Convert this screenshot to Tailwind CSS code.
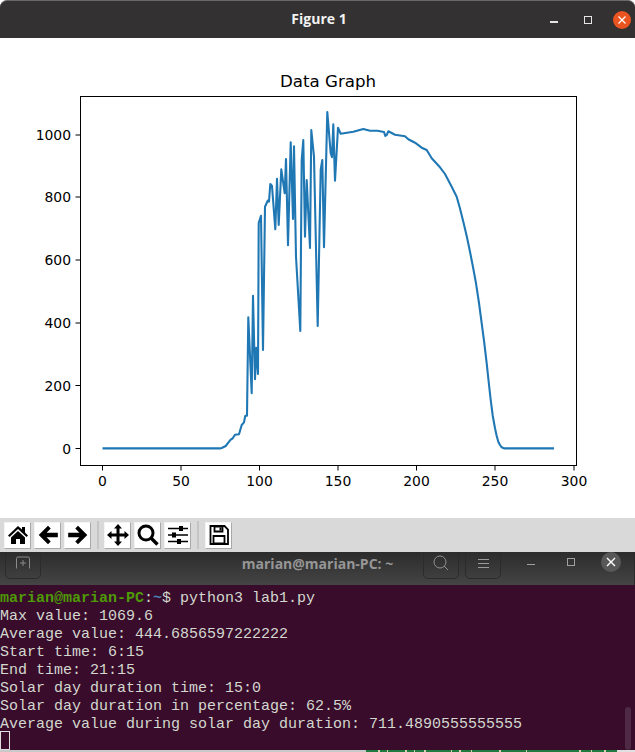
<!doctype html>
<html>
<head>
<meta charset="utf-8">
<script src="https://cdn.jsdelivr.net/npm/@tailwindcss/browser@4"></script>
</head>
<body class="w-[635px] h-[752px] overflow-hidden bg-white">
<div class="flex flex-col h-[752px] w-[635px]">
  <!-- figure title bar -->
  <header class="relative h-[38px] shrink-0 rounded-t-[7px] bg-[#333131] border-t border-[#6a6868] flex items-center justify-center">
    <span class="font-['Open_Sans'] font-bold text-[14px] text-[#f2f2f2] ml-[3px] mb-[2px]">Figure 1</span>
    <div class="absolute right-[4px] top-0 h-full flex items-center">
      <span class="block w-[8px] h-[1.5px] bg-[#e6e6e6] mt-[5px] mr-[26px]"></span>
      <span class="block w-[8px] h-[8px] border border-[#e6e6e6] mr-[21px]"></span>
      <span class="flex items-center justify-center w-[18px] h-[18px] rounded-full bg-[#e95420]">
        <svg width="10" height="10" viewBox="0 0 10 10"><path d="M1.5 1.5 8.5 8.5M8.5 1.5 1.5 8.5" stroke="#fff" stroke-width="1.2" fill="none"/></svg>
      </span>
    </div>
  </header>

  <!-- matplotlib figure -->
  <svg class="block shrink-0 bg-white" width="635" height="480" viewBox="0 38 635 480" font-family="DejaVu Sans" fill="#000">
    <text x="328" y="87" text-anchor="middle" font-size="16.67">Data Graph</text>
    <rect x="80.5" y="96.5" width="496" height="369" fill="none" stroke="#000" stroke-width="1"/>
    <g stroke="#000" stroke-width="1">
      <path d="M102.5 465.5v5M181 465.500v5M259.500 465.500v5M338 465.500v5M416.500 465.500v5M495 465.500v5M574 465.500v5"/>
      <path d="M75.500 448.500h5M75.500 385.500h5M75.500 323h5M75.500 260h5M75.500 197h5M75.500 135h5"/>
    </g>
    <g font-size="13.9" text-anchor="middle">
      <text x="102.500" y="486">0</text>
      <text x="181" y="486">50</text>
      <text x="259.500" y="486">100</text>
      <text x="338" y="486">150</text>
      <text x="416.500" y="486">200</text>
      <text x="495" y="486">250</text>
      <text x="574" y="486">300</text>
    </g>
    <g font-size="13.9" text-anchor="end">
      <text x="71" y="453.500">0</text>
      <text x="71" y="390.500">200</text>
      <text x="71" y="328">400</text>
      <text x="71" y="265">600</text>
      <text x="71" y="202">800</text>
      <text x="71" y="140">1000</text>
    </g>
    <polyline fill="none" stroke="#1f77b4" stroke-width="2.080" stroke-linejoin="round" points="102.500,448.400 220,448.400 221.700,448 225.700,446 228.300,442.700 230.700,439.700 232.700,438.300 235,434.700 239,434.300 241.700,425 244,422.300 245.300,415.700 247,415.700 248.300,317.300 251.700,393.300 253,295.700 255,379.300 256.300,347.700 258,374 258.700,223 261,215.700 263,350 265,206.700 267.700,200.700 269,201.700 270.300,184 272,186 275.300,229.300 277,178.700 278.700,225 281.300,169.300 284.700,193.300 286,159 288,245.300 290.700,142.300 293,219 294,146.300 296,256.700 300.300,331 301.700,160 303.300,140 305,236.700 306.700,180 310,248 311.300,130 314,156.700 317.700,326 320.700,170 322.300,160 324,247.300 327.300,112 330.700,153.300 332,157.300 333.300,124.300 335,180.700 338,127.700 340.700,133.700 353.300,131.700 363.300,129 370,130.700 377.300,130.700 384,132 385.300,136 386.700,135 388.300,131.300 395,134.700 405,136.300 408.300,139.300 415,142.700 421.700,147.700 426.700,150 431.700,158.300 440,167.300 445,174 451.700,186.700 456.700,196.700 460,208.500 463.300,221.700 466.700,236 470,251.700 473,267 476,283.300 479,303 481.700,323.300 484.300,343 486.700,363.300 488.700,382 490.700,400 492.700,415.500 495,428.300 496.700,436 498.300,441.700 500,445 501.700,447.300 504,448.400 554,448.400"/>
  </svg>

  <!-- matplotlib toolbar -->
  <nav class="h-[34px] shrink-0 bg-[#d9d9d9] flex items-center pl-[4px]">
    <div class="flex gap-[3px]">
      <button class="w-[27px] h-[27px] bg-white border border-t-[#f4f4f4] border-l-[#f4f4f4] border-r-[#a8a8a8] border-b-[#a8a8a8] flex items-center justify-center">
        <svg width="22" height="22" viewBox="0 0 22 22"><path d="M11 2 1 11.500l1.500 1.500L11 5l8.500 8 1.500-1.500-3-3V3h-3v2.500z" fill="#000"/><path d="M4 13.500 11 7l7 6.500V20h-5v-5H9v5H4z" fill="#000"/></svg>
      </button>
      <button class="w-[27px] h-[27px] bg-white border border-t-[#f4f4f4] border-l-[#f4f4f4] border-r-[#a8a8a8] border-b-[#a8a8a8] flex items-center justify-center">
        <svg width="24" height="24" viewBox="0 0 22 22"><path d="M11 2.500 2.500 11l8.500 8.500 2.500-2.500-3.800-4H20V9H9.700l3.800-4z" fill="#000"/></svg>
      </button>
      <button class="w-[27px] h-[27px] bg-white border border-t-[#f4f4f4] border-l-[#f4f4f4] border-r-[#a8a8a8] border-b-[#a8a8a8] flex items-center justify-center">
        <svg width="24" height="24" viewBox="0 0 22 22"><path d="M11 2.500 19.500 11 11 19.500 8.500 17l3.800-4H2V9h10.300L8.500 5z" fill="#000"/></svg>
      </button>
    </div>
    <span class="block w-[2px] h-[28px] bg-[#c4c4c4] ml-[6px] mr-[5px]"></span>
    <div class="flex gap-[3px]">
      <button class="w-[27px] h-[27px] bg-white border border-t-[#f4f4f4] border-l-[#f4f4f4] border-r-[#a8a8a8] border-b-[#a8a8a8] flex items-center justify-center">
        <svg width="24" height="24" viewBox="0 0 24 24"><path d="M12 1l4 4.500h-2.500v5h5V8l4.500 4-4.500 4v-2.500h-5v5H16L12 23l-4-4.500h2.500v-5h-5V16L1 12l4.500-4v2.500h5v-5H8z" fill="#000"/></svg>
      </button>
      <button class="w-[27px] h-[27px] bg-white border border-t-[#f4f4f4] border-l-[#f4f4f4] border-r-[#a8a8a8] border-b-[#a8a8a8] flex items-center justify-center">
        <svg width="24" height="24" viewBox="0 0 24 24"><circle cx="10" cy="10" r="7" fill="none" stroke="#000" stroke-width="3"/><path d="M15 15l6.500 6.500" stroke="#000" stroke-width="3.400" fill="none"/></svg>
      </button>
      <button class="w-[27px] h-[27px] bg-white border border-t-[#f4f4f4] border-l-[#f4f4f4] border-r-[#a8a8a8] border-b-[#a8a8a8] flex items-center justify-center">
        <svg width="24" height="24" viewBox="0 0 24 24"><path d="M2 5.500h20M2 12h20M2 18.500h20" stroke="#000" stroke-width="1.600" fill="none"/><path d="M13 3h4v5h-4zM6 9.500h4v5H6zM11 16h4v5h-4z" fill="#000"/></svg>
      </button>
    </div>
    <span class="block w-[2px] h-[28px] bg-[#c4c4c4] ml-[6px] mr-[6px]"></span>
    <button class="w-[27px] h-[27px] bg-white border border-t-[#f4f4f4] border-l-[#f4f4f4] border-r-[#a8a8a8] border-b-[#a8a8a8] flex items-center justify-center">
      <svg width="22" height="22" viewBox="0 0 22 22"><path d="M2.500 2h14l3.500 3.500V20H2.500z" fill="none" stroke="#000" stroke-width="1.800"/><path d="M6.500 2.500h8v5h-8z" fill="none" stroke="#000" stroke-width="1.800"/><path d="M11.500 3.500h2v3h-2z" fill="#000"/><path d="M5.500 12h11v7.500h-11z" fill="none" stroke="#000" stroke-width="1.800"/></svg>
    </button>
  </nav>

  <!-- terminal header -->
  <div class="relative h-[33px] shrink-0 bg-gradient-to-b from-[#2c2c2c] to-[#454545] flex items-center justify-center overflow-hidden">
    <span class="font-['Open_Sans'] font-bold text-[14px] text-[#969696] mb-[11px]">marian@marian-PC: ~</span>
    <div class="absolute left-[5px] top-[-8px] w-[36px] h-[35px] border border-[#2b2b2b] rounded-[5px] flex items-center justify-center pt-[3px]">
      <svg width="16" height="14" viewBox="0 0 16 14"><path d="M1.500 12.500V2.500q0-1.500 1.500-1.500h10q1.500 0 1.500 1.500v10" fill="none" stroke="#8a8a8a"/><path d="M8 4v6M5 7h6" stroke="#8a8a8a" fill="none"/></svg>
    </div>
    <div class="absolute left-[423px] top-[-8px] w-[36px] h-[35px] border border-[#2b2b2b] rounded-[5px] flex items-center justify-center pt-[3px]">
      <svg width="16" height="16" viewBox="0 0 16 16"><circle cx="7" cy="7" r="6" fill="none" stroke="#8f8f8f"/><path d="M11 11l4 4" stroke="#8f8f8f" fill="none"/></svg>
    </div>
    <div class="absolute left-[465px] top-[-8px] w-[36px] h-[35px] border border-[#2b2b2b] rounded-[5px] flex flex-col gap-[3px] items-center justify-center pt-[3px]">
      <span class="block w-[11px] h-px bg-[#9a9a9a]"></span>
      <span class="block w-[11px] h-px bg-[#9a9a9a]"></span>
      <span class="block w-[11px] h-px bg-[#9a9a9a]"></span>
    </div>
    <span class="absolute left-[527px] top-[12px] w-[8px] h-px bg-[#a0a0a0]"></span>
    <span class="absolute left-[567px] top-[6px] w-[8px] h-[8px] border border-[#a0a0a0]"></span>
    <span class="absolute left-[601px] top-0 w-[20px] h-[20px] rounded-full bg-[#585858] flex items-center justify-center">
      <svg width="10" height="10" viewBox="0 0 10 10"><path d="M1 1l8 8M9 1l-8 8" stroke="#fff" stroke-width="1.400" fill="none"/></svg>
    </span>
    <span class="absolute right-0 top-0 w-px h-full bg-[#2a2a2a]"></span>
  </div>

  <!-- terminal body -->
  <div class="relative flex-1 bg-[#380c2a] font-['Liberation_Mono'] text-[15px] leading-[18px] text-[#d3d7cf] pt-[5px]">
    <div><span class="text-[#4e9a06] font-bold">marian@marian-PC</span>:<span class="text-[#4a7fb5] font-bold">~</span>$ python3 lab1.py</div>
    <div>Max value: 1069.6</div>
    <div>Average value: 444.6856597222222</div>
    <div>Start time: 6:15</div>
    <div>End time: 21:15</div>
    <div>Solar day duration time: 15:0</div>
    <div>Solar day duration in percentage: 62.5%</div>
    <div>Average value during solar day duration: 711.4890555555555</div>
    <div class="w-[10px] h-[19px] border border-[#e0e0e0] mt-[-3px]"></div>
    <span class="absolute left-[625px] top-[122px] w-[6px] h-[43px] rounded-full bg-[#4e2a44]"></span>
  </div>
  <div class="h-[2px] shrink-0 flex">
    <span class="block w-[366px] bg-[#c9c9c9]"></span>
    <svg class="block" width="251" height="2" viewBox="0 0 251 2"><rect width="251" height="2" fill="#1e7a3e"/><path d="M12 0h2v2h-2zM21 0h1v2h-1zM39 0h2v2h-2zM48 0h1v2h-1zM58 0h2v2h-2zM85 0h1v2h-1zM93 0h2v2h-2zM105 0h1v2h-1zM133 0h2v2h-2zM160 0h1v2h-1zM213 0h2v2h-2zM225 0h1v2h-1zM238 0h2v2h-2z" fill="#d9cfae"/></svg>
    <span class="block flex-1 bg-[#e0e0e0]"></span>
  </div>
</div>
</body>
</html>
